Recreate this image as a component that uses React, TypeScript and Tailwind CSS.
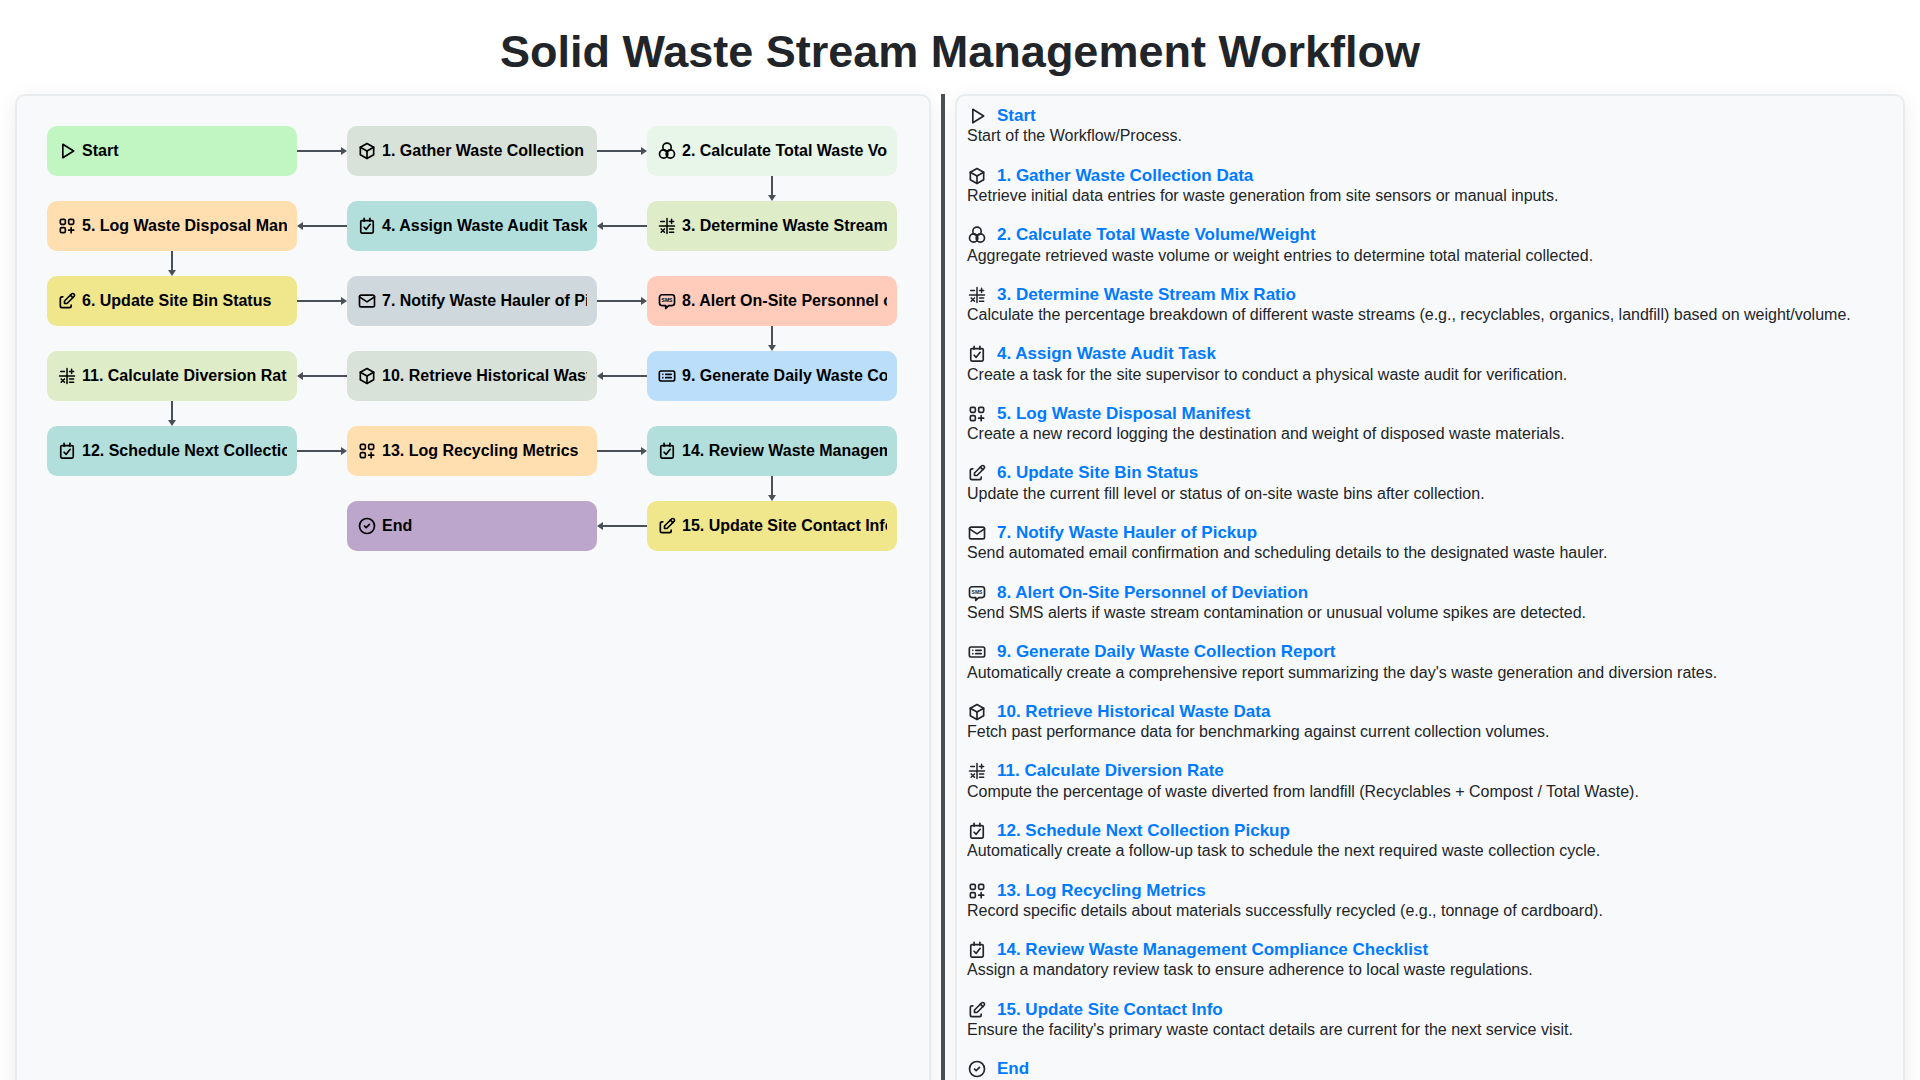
import { TbPlayerPlay, TbBox, TbEdit, TbMail, TbCircleCheck } from "react-icons/tb";
import type { ComponentType, ReactNode } from "react";

type IconProps = { className?: string; size?: number };
type Icon = ComponentType<IconProps>;

const Svg = ({ className, size, children }: IconProps & { children: ReactNode }) => (
  <svg
    className={className}
    width={size}
    height={size}
    viewBox="0 0 24 24"
    fill="none"
    stroke="currentColor"
    strokeWidth={2}
    strokeLinecap="round"
    strokeLinejoin="round"
  >
    {children}
  </svg>
);

const ThreeCircles = (props: IconProps) => (
  <Svg {...props}>
    <circle cx="12" cy="7.6" r="5" />
    <circle cx="8" cy="15.6" r="5" />
    <circle cx="16" cy="15.6" r="5" />
  </Svg>
);

const MathGrid = (props: IconProps) => (
  <Svg {...props}>
    <path
      strokeWidth={1.8}
      d="M3 12h18M12 3v18M4.5 6.5h4.5M15 6.5h5M17.5 4v5M5 15.5l4 4M9 15.5l-4 4M15 15.5h5M15 19.5h5"
    />
  </Svg>
);

const TaskCheck = (props: IconProps) => (
  <Svg {...props}>
    <rect x="4.5" y="5.5" width="15" height="15" rx="1.5" />
    <path d="M8.5 2.8v3.6M15.5 2.8v3.6M8.5 13.5l2.5 2.5l4.8-6" />
  </Svg>
);

const AppsPlus = (props: IconProps) => (
  <Svg {...props}>
    <rect x="4" y="4" width="6" height="6" rx="1.5" />
    <rect x="14" y="4" width="6" height="6" rx="1.5" />
    <rect x="4" y="14" width="6" height="6" rx="1.5" />
    <path d="M14 17h6M17 14v6" />
  </Svg>
);

const SmsBubble = (props: IconProps) => (
  <Svg {...props}>
    <path d="M6 4.5h12a3 3 0 0 1 3 3v7a3 3 0 0 1-3 3h-4l-3.5 3.5v-3.5H6a3 3 0 0 1-3-3v-7a3 3 0 0 1 3-3z" />
    <text x="12" y="13.2" textAnchor="middle" fontSize="6" fontWeight="700" fill="currentColor" stroke="none">
      SMS
    </text>
  </Svg>
);

const ReportCard = (props: IconProps) => (
  <Svg {...props}>
    <rect x="2.8" y="6" width="18.4" height="12" rx="2" />
    <path d="M7 10h.01M7 14h.01M10.5 10H17M10.5 14H17" />
  </Svg>
);

type Step = {
  label: string;
  desc: string;
  icon: Icon;
  color: string;
};

const steps: Step[] = [
  { label: "Start", desc: "Start of the Workflow/Process.", icon: TbPlayerPlay, color: "bg-[#c1f5c1]" },
  { label: "1. Gather Waste Collection Data", desc: "Retrieve initial data entries for waste generation from site sensors or manual inputs.", icon: TbBox, color: "bg-[#d9e2d9]" },
  { label: "2. Calculate Total Waste Volume/Weight", desc: "Aggregate retrieved waste volume or weight entries to determine total material collected.", icon: ThreeCircles, color: "bg-[#e8f5e9]" },
  { label: "3. Determine Waste Stream Mix Ratio", desc: "Calculate the percentage breakdown of different waste streams (e.g., recyclables, organics, landfill) based on weight/volume.", icon: MathGrid, color: "bg-[#dfecc8]" },
  { label: "4. Assign Waste Audit Task", desc: "Create a task for the site supervisor to conduct a physical waste audit for verification.", icon: TaskCheck, color: "bg-[#b2dfdb]" },
  { label: "5. Log Waste Disposal Manifest", desc: "Create a new record logging the destination and weight of disposed waste materials.", icon: AppsPlus, color: "bg-[#ffdfb0]" },
  { label: "6. Update Site Bin Status", desc: "Update the current fill level or status of on-site waste bins after collection.", icon: TbEdit, color: "bg-[#f0e68c]" },
  { label: "7. Notify Waste Hauler of Pickup", desc: "Send automated email confirmation and scheduling details to the designated waste hauler.", icon: TbMail, color: "bg-[#cfd8dc]" },
  { label: "8. Alert On-Site Personnel of Deviation", desc: "Send SMS alerts if waste stream contamination or unusual volume spikes are detected.", icon: SmsBubble, color: "bg-[#ffccbc]" },
  { label: "9. Generate Daily Waste Collection Report", desc: "Automatically create a comprehensive report summarizing the day's waste generation and diversion rates.", icon: ReportCard, color: "bg-[#bbdefb]" },
  { label: "10. Retrieve Historical Waste Data", desc: "Fetch past performance data for benchmarking against current collection volumes.", icon: TbBox, color: "bg-[#d9e2d9]" },
  { label: "11. Calculate Diversion Rate", desc: "Compute the percentage of waste diverted from landfill (Recyclables + Compost / Total Waste).", icon: MathGrid, color: "bg-[#dfecc8]" },
  { label: "12. Schedule Next Collection Pickup", desc: "Automatically create a follow-up task to schedule the next required waste collection cycle.", icon: TaskCheck, color: "bg-[#b2dfdb]" },
  { label: "13. Log Recycling Metrics", desc: "Record specific details about materials successfully recycled (e.g., tonnage of cardboard).", icon: AppsPlus, color: "bg-[#ffdfb0]" },
  { label: "14. Review Waste Management Compliance Checklist", desc: "Assign a mandatory review task to ensure adherence to local waste regulations.", icon: TaskCheck, color: "bg-[#b2dfdb]" },
  { label: "15. Update Site Contact Info", desc: "Ensure the facility's primary waste contact details are current for the next service visit.", icon: TbEdit, color: "bg-[#f0e68c]" },
  { label: "End", desc: "End of the Workflow/Process.", icon: TbCircleCheck, color: "bg-[#bca6cc]" },
];

// grid is a snake: each row lists step index + the arrow leaving it
type Dir = "right" | "left" | "down" | null;
type Cell = { step: number; out: Dir } | null;

const rows: Cell[][] = [
  [{ step: 0, out: "right" }, { step: 1, out: "right" }, { step: 2, out: "down" }],
  [{ step: 5, out: "down" }, { step: 4, out: "left" }, { step: 3, out: "left" }],
  [{ step: 6, out: "right" }, { step: 7, out: "right" }, { step: 8, out: "down" }],
  [{ step: 11, out: "down" }, { step: 10, out: "left" }, { step: 9, out: "left" }],
  [{ step: 12, out: "right" }, { step: 13, out: "right" }, { step: 14, out: "down" }],
  [null, { step: 16, out: null }, { step: 15, out: "left" }],
];

const Arrow = ({ dir }: { dir: Dir }) => {
  if (dir === "right")
    return (
      <div className="absolute left-full top-1/2 flex h-0 w-[50px] items-center">
        <div className="h-[2px] flex-1 bg-[#495057]" />
        <div className="h-0 w-0 border-y-[4px] border-l-[6px] border-y-transparent border-l-[#495057]" />
      </div>
    );
  if (dir === "left")
    return (
      <div className="absolute right-full top-1/2 flex h-0 w-[50px] items-center">
        <div className="h-0 w-0 border-y-[4px] border-r-[6px] border-y-transparent border-r-[#495057]" />
        <div className="h-[2px] flex-1 bg-[#495057]" />
      </div>
    );
  if (dir === "down")
    return (
      <div className="absolute left-1/2 top-full flex h-[25px] w-0 flex-col items-center">
        <div className="w-[2px] flex-1 bg-[#495057]" />
        <div className="h-0 w-0 border-x-[4px] border-t-[6px] border-x-transparent border-t-[#495057]" />
      </div>
    );
  return null;
};

const Node = ({ cell }: { cell: Cell }) => {
  if (!cell) return <div className="h-[50px] w-[250px]" />;
  const step = steps[cell.step];
  const StepIcon = step.icon;
  return (
    <div className={`relative flex h-[50px] w-[250px] items-center rounded-[10px] px-[10px] ${step.color}`}>
      <div className="flex w-full items-center overflow-hidden whitespace-nowrap text-[16px] font-bold leading-[20px] text-[#000]">
        <StepIcon className="mr-[5px] shrink-0" size={20} />
        <span>{step.label}</span>
      </div>
      <Arrow dir={cell.out} />
    </div>
  );
};

const App = () => {
  return (
    <div className="h-[1080px] overflow-hidden bg-white font-['Liberation_Sans',Arial,sans-serif] text-[#212529]">
      <h1 className="pt-[25px] pb-[16px] text-center text-[45px] leading-[53px] font-bold">
        Solid Waste Stream Management Workflow
      </h1>
      <div className="flex px-[15px]">
        <div className="h-[1100px] w-[916px] shrink-0 rounded-[10px] border-2 border-[#e9ecef] bg-[#f8f9fa] p-[30px] shadow-[0_4px_20px_rgba(0,0,0,0.08)]">
          <div className="flex flex-col gap-[25px]">
            {rows.map((row, i) => (
              <div key={i} className="flex gap-[50px]">
                {row.map((cell, j) => (
                  <Node key={j} cell={cell} />
                ))}
              </div>
            ))}
          </div>
        </div>
        <div className="mx-[10px] h-[1100px] w-[4px] shrink-0 bg-[#495057]" />
        <div className="h-[1100px] flex-1 rounded-[10px] border-2 border-[#e9ecef] bg-[#f8f9fa] px-[10px] pt-[10px] shadow-[0_4px_20px_rgba(0,0,0,0.08)]">
          {steps.map((step) => {
            const StepIcon = step.icon;
            return (
              <div key={step.label} className="mb-[19.2px]">
                <div className="flex h-[20px] items-center text-[17px] leading-[20px] font-bold text-[#007bff]">
                  <StepIcon className="mr-[10px] shrink-0 text-[#212529]" size={20} />
                  <span>{step.label}</span>
                </div>
                <div className="mt-[0.4px] text-[16px] leading-[20px]">{step.desc}</div>
              </div>
            );
          })}
        </div>
      </div>
    </div>
  );
};

export default App;
